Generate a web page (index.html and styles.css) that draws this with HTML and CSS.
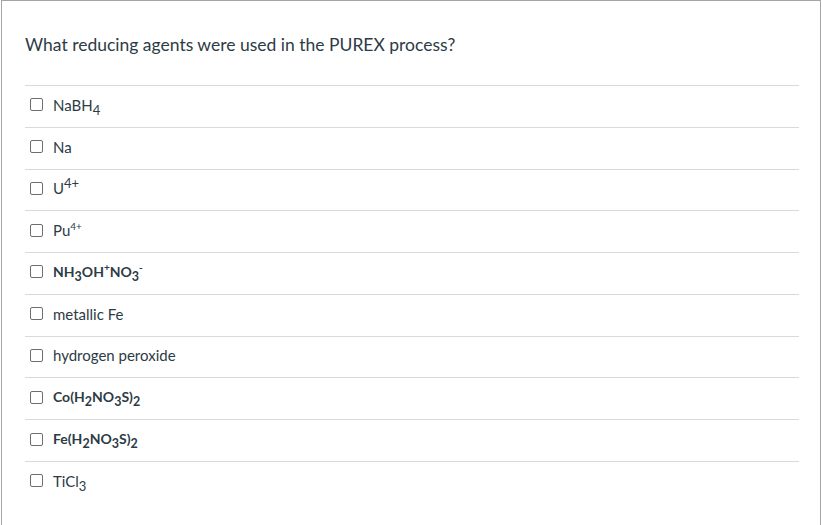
FILE: index.html
```html
<!DOCTYPE html>
<html>
<head>
<meta charset="utf-8">
<link rel="stylesheet" href="styles.css">
</head>
<body>
<div class="question">
  <div class="q-header">
    <p class="q-text">What reducing agents were used in the PUREX process?</p>
  </div>
  <div class="answers">
    <label class="answer"><span class="box"></span><span class="label">NaBH<sub>4</sub></span></label>
    <label class="answer"><span class="box"></span><span class="label">Na</span></label>
    <label class="answer"><span class="box"></span><span class="label">U<sup>4+</sup></span></label>
    <label class="answer"><span class="box"></span><span class="label">Pu<sup class="small">4+</sup></span></label>
    <label class="answer"><span class="box"></span><span class="label strong">NH<sub>3</sub>OH<sup class="small">+</sup>NO<sub>3</sub><sup class="small">-</sup></span></label>
    <label class="answer"><span class="box"></span><span class="label">metallic Fe</span></label>
    <label class="answer"><span class="box"></span><span class="label">hydrogen peroxide</span></label>
    <label class="answer"><span class="box"></span><span class="label strong">Co(H<sub>2</sub>NO<sub>3</sub>S)<sub>2</sub></span></label>
    <label class="answer"><span class="box"></span><span class="label strong">Fe(H<sub>2</sub>NO<sub>3</sub>S)<sub>2</sub></span></label>
    <label class="answer last"><span class="box"></span><span class="label">TiCl<sub>3</sub></span></label>
  </div>
</div>
</body>
</html>
```
FILE: styles.css
```css
html, body {
  margin: 0;
  padding: 0;
  background: #ffffff;
}
body {
  font-family: Lato, "Liberation Sans", sans-serif;
  color: #2d3b45;
}
.question {
  margin-left: 1px;
  width: 818px;
  height: 600px;
  border: 1px solid #a5a5a5;
  box-sizing: content-box;
}
.q-header {
  padding: 0 23px;
  height: 84px;
  display: flex;
  align-items: center;
}
.q-text {
  margin: 0;
  font-size: 17.5px;
  padding-top: 2px;
}
.answers {
  margin: 0 23px;
  width: 774px;
}
.answer {
  display: flex;
  align-items: center;
  height: 40.78px;
  padding-bottom: 3px;
  box-sizing: content-box;
  border-top: 1px solid #dadada;
  font-size: 15px;
}
.answer + .answer {
  height: 37.78px;
}
.answer:first-child {
  height: 37.78px;
}
.box {
  width: 11px;
  height: 11px;
  border: 1px solid #6e6e6e;
  border-radius: 2px;
  margin-left: 5px;
  margin-right: 10px;
  flex: none;
}
.label {
  line-height: 20px;
}
.strong {
  font-weight: bold;
  font-size: 14px;
}
sub, sup {
  font-size: 13px;
  line-height: 0;
}
.strong sub {
  font-size: 12.5px;
}
sub {
  vertical-align: -4px;
}
sup {
  vertical-align: 6px;
}
sup.small {
  font-size: 10px;
}
```
